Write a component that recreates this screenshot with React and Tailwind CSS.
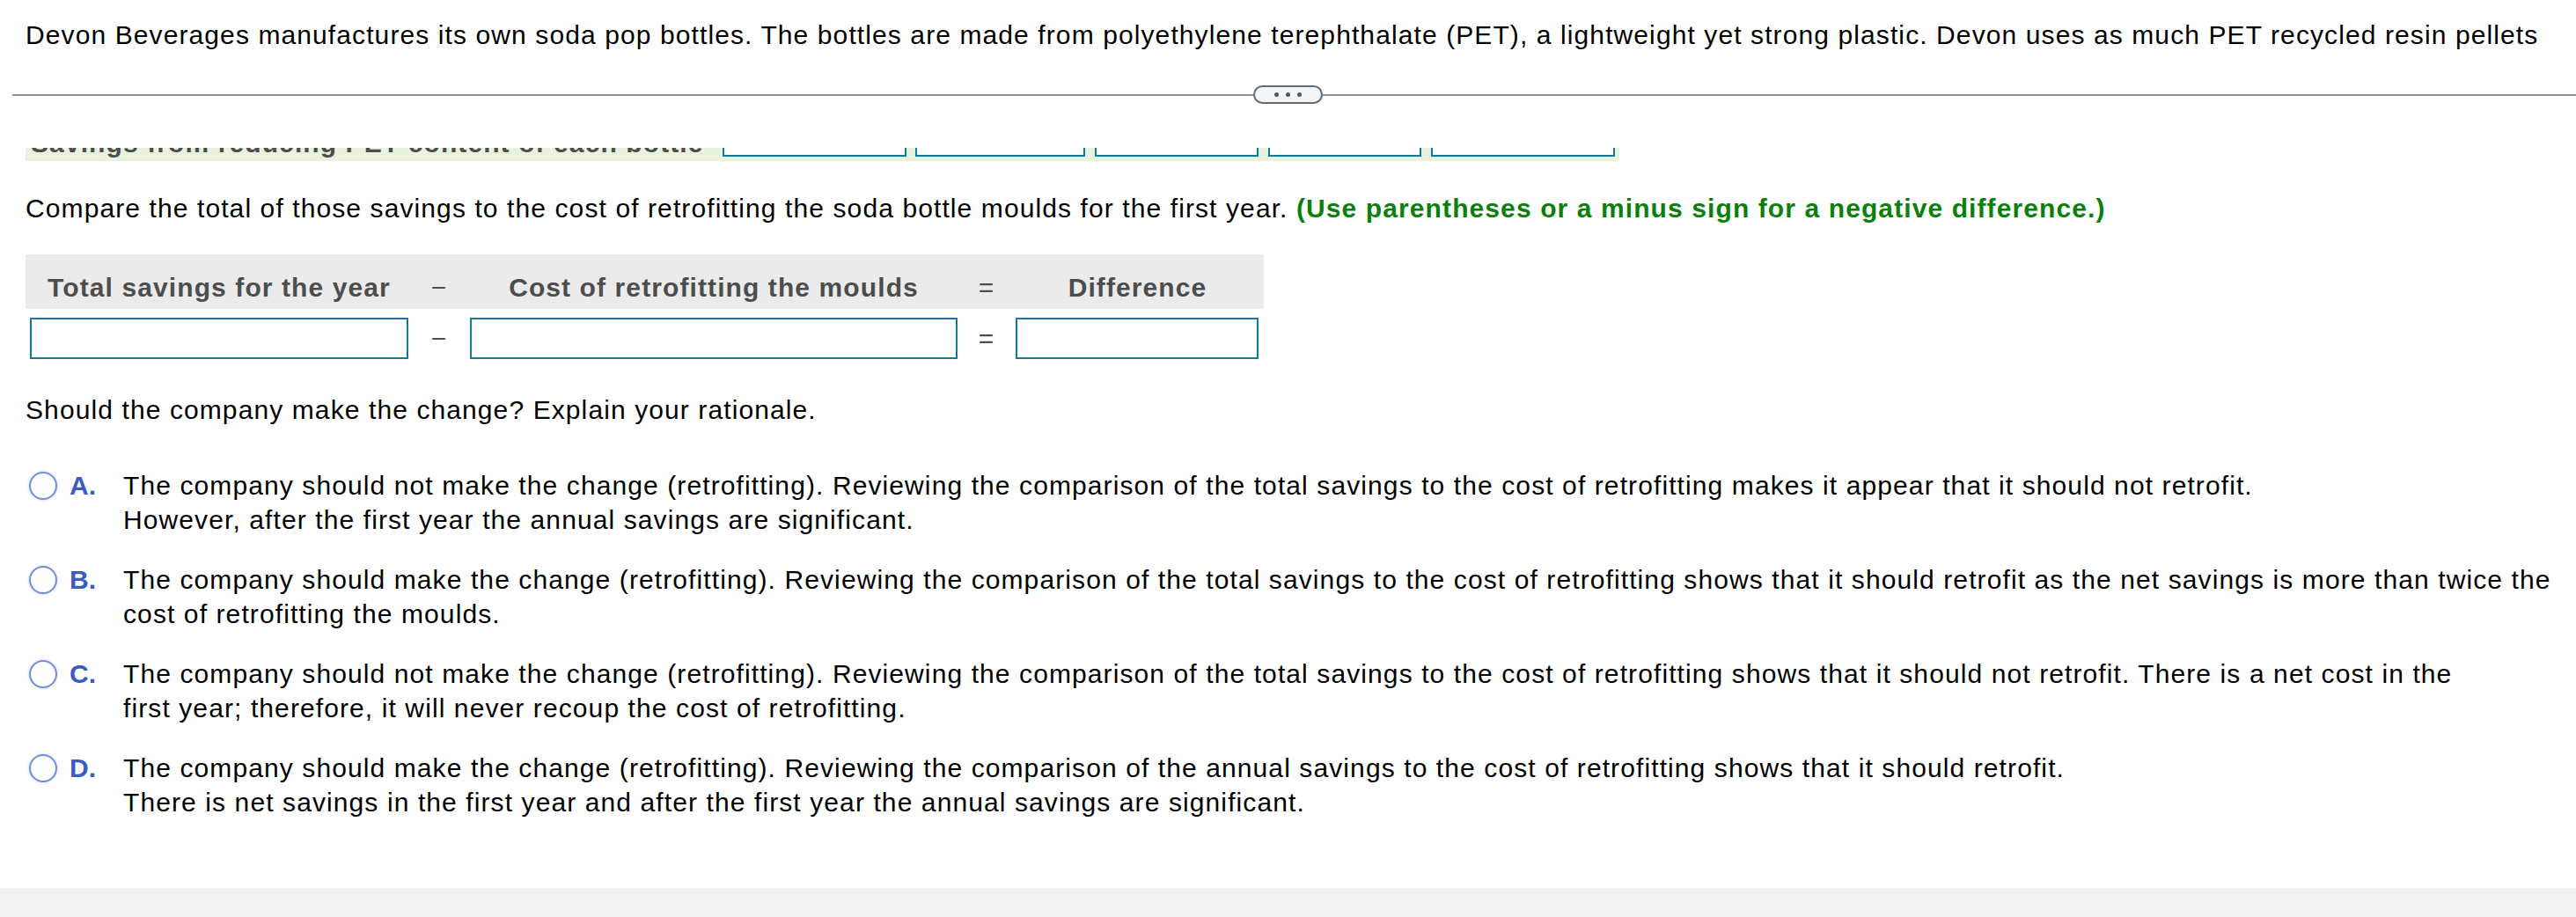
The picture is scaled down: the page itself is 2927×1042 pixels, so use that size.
const options = [
    {
        key: 'A',
        lines: [
            'The company should not make the change (retrofitting). Reviewing the comparison of the total savings to the cost of retrofitting makes it appear that it should not retrofit.',
            'However, after the first year the annual savings are significant.',
        ],
    },
    {
        key: 'B',
        lines: [
            'The company should make the change (retrofitting). Reviewing the comparison of the total savings to the cost of retrofitting shows that it should retrofit as the net savings is more than twice the',
            'cost of retrofitting the moulds.',
        ],
    },
    {
        key: 'C',
        lines: [
            'The company should not make the change (retrofitting). Reviewing the comparison of the total savings to the cost of retrofitting shows that it should not retrofit. There is a net cost in the',
            'first year; therefore, it will never recoup the cost of retrofitting.',
        ],
    },
    {
        key: 'D',
        lines: [
            'The company should make the change (retrofitting). Reviewing the comparison of the annual savings to the cost of retrofitting shows that it should retrofit.',
            'There is net savings in the first year and after the first year the annual savings are significant.',
        ],
    },
];

const Input = ({ className = '' }) => (
    <div className={`h-[47px] border-2 border-[#0e7b9b] bg-white ${className}`}></div>
);

const App = () => {
    return (
        <div className="w-[2927px] h-[1042px] bg-white flex flex-col overflow-hidden font-['Liberation_Sans',Arial,sans-serif] text-[30px] tracking-[1.1px] text-black">
            {/* Question stem (fixed top) */}
            <div className="pl-[29px] pt-[22px] leading-[36px] whitespace-nowrap overflow-hidden h-[58px]">
                Devon Beverages manufactures its own soda pop bottles. The bottles are made from polyethylene terephthalate (PET), a lightweight yet strong plastic. Devon uses as much PET recycled resin pellets
            </div>

            {/* Divider with expand button */}
            <div className="mt-[39px] pl-[14px] flex items-center h-[21px]">
                <div className="w-[1410px] h-[2px] bg-[#8a949e]"></div>
                <div className="w-[79px] h-[21px] rounded-full border-2 border-[#5e6b79] bg-[#f3f4f6] flex items-center justify-center gap-[8px]">
                    <span className="w-[5px] h-[5px] rounded-full bg-[#4a5563]"></span>
                    <span className="w-[5px] h-[5px] rounded-full bg-[#4a5563]"></span>
                    <span className="w-[5px] h-[5px] rounded-full bg-[#4a5563]"></span>
                </div>
                <div className="flex-1 h-[2px] bg-[#8a949e]"></div>
            </div>

            {/* Scrolling pane */}
            <div className="flex-1 mt-[50px] px-[29px] overflow-hidden">
                {/* Partially scrolled-out row */}
                <div className="h-[15px] overflow-hidden flex flex-col justify-end">
                    <div className="shrink-0 w-[1811px] h-[57px] bg-[#e9f2dc] flex items-end pb-[5px]">
                        <div className="w-[792px] pl-[6px] font-bold text-[#4d4d4d] leading-[36px] whitespace-nowrap mb-[-3px]">
                            Savings from reducing PET content of each bottle
                        </div>
                        <Input className="w-[209px]" />
                        <Input className="w-[193px] ml-[10px]" />
                        <Input className="w-[186px] ml-[11px]" />
                        <Input className="w-[174px] ml-[11px]" />
                        <Input className="w-[209px] ml-[11px]" />
                    </div>
                </div>

                <div className="mt-[36px] leading-[36px] whitespace-nowrap">
                    Compare the total of those savings to the cost of retrofitting the soda bottle moulds for the first year.{' '}
                    <span className="font-bold text-[#0b7f0b]">(Use parentheses or a minus sign for a negative difference.)</span>
                </div>

                {/* Difference table */}
                <div className="mt-[34px] w-[1407px]">
                    <div className="grid grid-cols-[440px_60px_564px_56px_287px] h-[62px] bg-[#ebebeb] items-end pb-[6px] font-bold text-[#4d4d4d] leading-[36px] text-center whitespace-nowrap">
                        <div>Total savings for the year</div>
                        <div className="font-normal">−</div>
                        <div>Cost of retrofitting the moulds</div>
                        <div className="font-normal">=</div>
                        <div>Difference</div>
                    </div>
                    <div className="grid grid-cols-[440px_60px_564px_56px_287px] mt-[10px] items-center text-center text-[#4d4d4d]">
                        <div className="px-[5px]"><Input /></div>
                        <div className="leading-[36px]">−</div>
                        <div className="px-[5px]"><Input /></div>
                        <div className="leading-[36px]">=</div>
                        <div className="pl-[5px] pr-[6px]"><Input /></div>
                    </div>
                </div>

                <div className="mt-[40px] leading-[36px] whitespace-nowrap">Should the company make the change? Explain your rationale.</div>

                {/* Answer choices */}
                <div className="mt-[48px] flex flex-col gap-[29px]">
                    {options.map((opt) => (
                        <div key={opt.key} className="flex items-start leading-[39px]">
                            <div className="ml-[4px] mt-[4px] w-[32px] h-[32px] shrink-0 rounded-full border-2 border-[#6f8ce0] shadow-[0_0_3px_rgba(111,140,224,0.45)]"></div>
                            <div className="ml-[14px] w-[61px] shrink-0 font-bold text-[#3b5bc4] tracking-normal">{opt.key}.</div>
                            <div className="whitespace-nowrap">
                                {opt.lines.map((line, i) => (
                                    <div key={i}>{line}</div>
                                ))}
                            </div>
                        </div>
                    ))}
                </div>
            </div>

            <div className="h-[33px] bg-[#f2f2f2] shrink-0"></div>
        </div>
    );
};

export default App;
